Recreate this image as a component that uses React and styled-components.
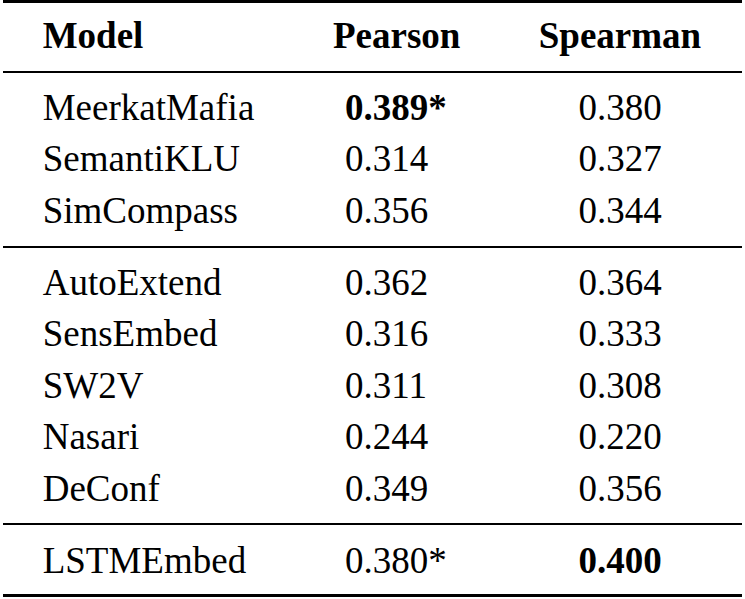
import React from "react";
import styled, { createGlobalStyle } from "styled-components";

const Global = createGlobalStyle`
  html, body { margin: 0; padding: 0; background: #fff; }
  body { font-family: "Liberation Serif", "Times New Roman", serif; color: #000; }
`;

const Table = styled.div`
  width: 739px;
  margin-left: 3px;
  display: flex;
  flex-direction: column;
`;

const Rule = styled.div`
  height: ${(p) => p.$h}px;
  background: #000;
  flex: none;
`;

const Section = styled.div`
  padding-top: ${(p) => p.$pt}px;
  padding-bottom: ${(p) => p.$pb}px;
  display: flex;
  flex-direction: column;
`;

const Row = styled.div`
  display: grid;
  grid-template-columns: 330px 170px 234px;
  height: 51.6px;
  line-height: 51.6px;
  font-size: 37px;
  white-space: nowrap;
`;

const Cell = styled.div`
  font-weight: ${(p) => (p.$bold ? 700 : 400)};
  text-align: ${(p) => p.$align || "left"};
  padding-left: ${(p) => p.$indent || 0}px;
`;

const groups = [
  {
    pt: 8.2,
    pb: 10,
    rows: [
      ["MeerkatMafia", "0.389*", "0.380", true, false],
      ["SemantiKLU", "0.314", "0.327"],
      ["SimCompass", "0.356", "0.344"],
    ],
  },
  {
    pt: 8.2,
    pb: 8.8,
    rows: [
      ["AutoExtend", "0.362", "0.364"],
      ["SensEmbed", "0.316", "0.333"],
      ["SW2V", "0.311", "0.308"],
      ["Nasari", "0.244", "0.220"],
      ["DeConf", "0.349", "0.356"],
    ],
  },
  {
    pt: 9.5,
    pb: 7.9,
    rows: [["LSTMEmbed", "0.380*", "0.400", false, true]],
  },
];

function DataRow({ row }) {
  const [name, p, s, pb, sb] = row;
  return (
    <Row>
      <Cell $indent={39.7}>{name}</Cell>
      <Cell $indent={12} $bold={pb}>{p}</Cell>
      <Cell $align="center" $bold={sb}>{s}</Cell>
    </Row>
  );
}

export default function App() {
  return (
    <>
      <Global />
      <Table>
        <Rule $h={3} />
        <Section $pt={7} $pb={9.9}>
          <Row>
            <Cell $indent={39.7} $bold>Model</Cell>
            <Cell $bold>Pearson</Cell>
            <Cell $align="center" $bold>Spearman</Cell>
          </Row>
        </Section>
        {groups.map((g, i) => (
          <React.Fragment key={i}>
            <Rule $h={i === 0 ? 2 : 2} />
            <Section $pt={g.pt} $pb={g.pb}>
              {g.rows.map((r) => (
                <DataRow key={r[0]} row={r} />
              ))}
            </Section>
          </React.Fragment>
        ))}
        <Rule $h={3} />
      </Table>
    </>
  );
}
